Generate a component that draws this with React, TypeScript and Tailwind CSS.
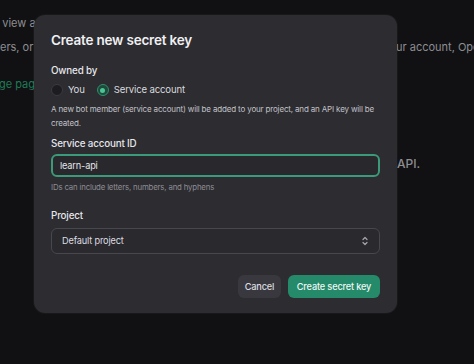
import React from "react";

export default function App() {
  return (
    <div
      className="relative w-[474px] h-[364px] overflow-hidden bg-[#111113] text-[#e9e9ec]"
      style={{ fontFamily: "Inter, 'Noto Sans', sans-serif" }}
    >
      {/* background page fragments behind overlay */}
      <div className="absolute left-[-4px] top-[15px] text-[11px] text-[#8d8d92] whitespace-nowrap">, view and</div>
      <div className="absolute left-[0px] top-[39px] text-[11px] text-[#8d8d92] whitespace-nowrap">ers, or ex</div>
      <div className="absolute left-[396px] top-[39px] text-[11px] text-[#8d8d92] whitespace-nowrap">ur account, Open</div>
      <div className="absolute left-[-1px] top-[76px] text-[11px] text-[#1f7a57] whitespace-nowrap">ge page.</div>
      <div className="absolute left-[397px] top-[155px] text-[12px] font-medium text-[#8d8d92] whitespace-nowrap">API.</div>

      {/* modal */}
      <div className="absolute left-[34px] top-[15px] w-[363px] h-[298px] rounded-[11px] bg-[#2c2c31] shadow-[0_0_0_1px_rgba(255,255,255,0.03)] px-[17px] pt-[16px] tracking-[-0.01em]">
        <h2 className="text-[13.5px] leading-[18px] font-semibold text-[#f0f0f2] tracking-[-0.015em]">Create new secret key</h2>

        <div className="mt-[15px] text-[9.8px] leading-[14px] font-medium text-[#e6e6e9]">Owned by</div>
        <div className="mt-[5px] flex items-center h-[14px] text-[9.6px]">
          <span className="w-[12px] h-[12px] rounded-full bg-[#1d1d21] border border-[#3a3a40]" />
          <span className="ml-[5px] text-[#dadade]">You</span>
          <span className="ml-[12px] w-[12px] h-[12px] rounded-full bg-[#1e4a3c] border border-[#2f8f6c] flex items-center justify-center">
            <span className="w-[5px] h-[5px] rounded-full bg-[#4cc596]" />
          </span>
          <span className="ml-[5px] text-[#dadade]">Service account</span>
        </div>

        <p className="mt-[5px] text-[8px] leading-[14px] text-[#c2c2c7]">
          A new bot member (service account) will be added to your project, and an API key will be created.
        </p>

        <div className="mt-[7px] text-[9.8px] leading-[14px] font-medium text-[#e6e6e9]">Service account ID</div>
        <div className="mt-[3px] h-[23px] rounded-[6px] border-2 border-[#3b9a79] bg-[#28282d] flex items-center px-[7px] text-[9.2px] text-[#e6e6e9]">
          learn-api
        </div>
        <div className="mt-[4px] text-[7.8px] leading-[12px] text-[#8e8e94]">IDs can include letters, numbers, and hyphens</div>

        <div className="mt-[16px] text-[9.8px] leading-[14px] font-medium text-[#e6e6e9]">Project</div>
        <div className="mt-[5px] h-[26px] rounded-[6px] border border-[#47474d] bg-[#29292e] flex items-center justify-between pl-[10px] pr-[10px] text-[9.2px] text-[#dcdce0]">
          <span>Default project</span>
          <svg width="8" height="10" viewBox="0 0 8 10" fill="none" stroke="#a5a5ab" strokeWidth="1.2" strokeLinecap="round" strokeLinejoin="round">
            <path d="M2 3.5 L4 1.5 L6 3.5" />
            <path d="M2 6.5 L4 8.5 L6 6.5" />
          </svg>
        </div>

        <div className="mt-[21px] flex justify-end gap-[7px]">
          <button className="h-[23px] w-[43px] rounded-[6px] bg-[#38383e] text-[9.2px] font-medium text-[#dcdce0]">Cancel</button>
          <button className="h-[23px] w-[92px] rounded-[6px] bg-[#248a69] text-[9.2px] font-medium text-[#eef7f3]">Create secret key</button>
        </div>
      </div>
    </div>
  );
}
